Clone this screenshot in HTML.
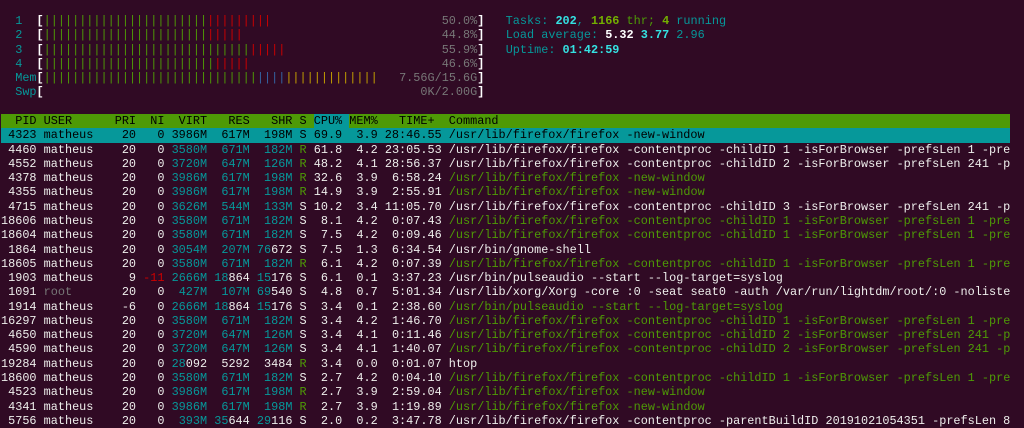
<!DOCTYPE html>
<html><head><meta charset="utf-8"><style>
html,body{margin:0;padding:0;background:#300a24;width:1024px;height:427px;overflow:hidden}
#t{position:absolute;left:1px;top:14px;width:1009px;font-family:"Liberation Mono",monospace;font-size:11.85px;color:#eeeeec}
.l{height:14.29px;line-height:14.29px;overflow:hidden;white-space:pre}
.c{color:#06989a}.C{color:#34e2e2;font-weight:bold}.g{color:#4e9a06}.G{color:#73b000;font-weight:bold}
.r{color:#cc0000}.b{color:#3465a4}.y{color:#c4a000}.k{color:#777777}.W{color:#fff;font-weight:bold}
.hd{background:#4e9a06;color:#000}.hc{background:#06989a}
.sel{background:#06989a;color:#000}
</style></head><body><div id="t"><div class="l">  <span class="c">1</span>  <span class="W">[</span><span class="g">|||||||||||||||||||||||</span><span class="r">|||||||||</span>                        <span class="k">50.0%</span><span class="W">]</span>   <span class="c">Tasks: </span><span class="C">202</span><span class="c">, </span><span class="G">1166</span><span class="g"> thr; </span><span class="G">4</span><span class="c"> running</span></div><div class="l">  <span class="c">2</span>  <span class="W">[</span><span class="g">|||||||||||||||||||||||</span><span class="r">|||||</span>                            <span class="k">44.8%</span><span class="W">]</span>   <span class="c">Load average: </span><span class="W">5.32 </span><span class="C">3.77 </span><span class="c">2.96</span></div><div class="l">  <span class="c">3</span>  <span class="W">[</span><span class="g">|||||||||||||||||||||||||||||</span><span class="r">|||||</span>                      <span class="k">55.9%</span><span class="W">]</span>   <span class="c">Uptime: </span><span class="C">01:42:59</span></div><div class="l">  <span class="c">4</span>  <span class="W">[</span><span class="g">||||||||||||||||||||||||</span><span class="r">|||||</span>                           <span class="k">46.6%</span><span class="W">]</span></div><div class="l">  <span class="c">Mem</span><span class="W">[</span><span class="g">||||||||||||||||||||||||||||||</span><span class="b">||||</span><span class="y">|||||||||||||</span>   <span class="k">7.56G/15.6G</span><span class="W">]</span></div><div class="l">  <span class="c">Swp</span><span class="W">[</span>                                                     <span class="k">0K/2.00G</span><span class="W">]</span></div><div class="l"> </div><div class="l hd">  PID USER      PRI  NI  VIRT   RES   SHR S <span class="hc">CPU% </span>MEM%   TIME+  Command</div><div class="l sel"> 4323 matheus    20   0 3986M  617M  198M S 69.9  3.9 28:46.55 /usr/lib/firefox/firefox -new-window</div><div class="l"> 4460 matheus    20   0 <span class="c">3580M</span>  <span class="c">671M</span>  <span class="c">182M</span> <span class="g">R</span> 61.8  4.2 23:05.53 /usr/lib/firefox/firefox -contentproc -childID 1 -isForBrowser -prefsLen 1 -pre</div><div class="l"> 4552 matheus    20   0 <span class="c">3720M</span>  <span class="c">647M</span>  <span class="c">126M</span> <span class="g">R</span> 48.2  4.1 28:56.37 /usr/lib/firefox/firefox -contentproc -childID 2 -isForBrowser -prefsLen 241 -p</div><div class="l"> 4378 matheus    20   0 <span class="c">3986M</span>  <span class="c">617M</span>  <span class="c">198M</span> <span class="g">R</span> 32.6  3.9  6:58.24 <span class="g">/usr/lib/firefox/firefox -new-window</span></div><div class="l"> 4355 matheus    20   0 <span class="c">3986M</span>  <span class="c">617M</span>  <span class="c">198M</span> <span class="g">R</span> 14.9  3.9  2:55.91 <span class="g">/usr/lib/firefox/firefox -new-window</span></div><div class="l"> 4715 matheus    20   0 <span class="c">3626M</span>  <span class="c">544M</span>  <span class="c">133M</span> S 10.2  3.4 11:05.70 /usr/lib/firefox/firefox -contentproc -childID 3 -isForBrowser -prefsLen 241 -p</div><div class="l">18606 matheus    20   0 <span class="c">3580M</span>  <span class="c">671M</span>  <span class="c">182M</span> S  8.1  4.2  0:07.43 <span class="g">/usr/lib/firefox/firefox -contentproc -childID 1 -isForBrowser -prefsLen 1 -pre</span></div><div class="l">18604 matheus    20   0 <span class="c">3580M</span>  <span class="c">671M</span>  <span class="c">182M</span> S  7.5  4.2  0:09.46 <span class="g">/usr/lib/firefox/firefox -contentproc -childID 1 -isForBrowser -prefsLen 1 -pre</span></div><div class="l"> 1864 matheus    20   0 <span class="c">3054M</span>  <span class="c">207M</span> <span class="c">76</span>672 S  7.5  1.3  6:34.54 /usr/bin/gnome-shell</div><div class="l">18605 matheus    20   0 <span class="c">3580M</span>  <span class="c">671M</span>  <span class="c">182M</span> <span class="g">R</span>  6.1  4.2  0:07.39 <span class="g">/usr/lib/firefox/firefox -contentproc -childID 1 -isForBrowser -prefsLen 1 -pre</span></div><div class="l"> 1903 matheus     9 <span class="r">-11</span> <span class="c">2666M</span> <span class="c">18</span>864 <span class="c">15</span>176 S  6.1  0.1  3:37.23 /usr/bin/pulseaudio --start --log-target=syslog</div><div class="l"> 1091 <span class="k">root     </span>  20   0  <span class="c">427M</span>  <span class="c">107M</span> <span class="c">69</span>540 S  4.8  0.7  5:01.34 /usr/lib/xorg/Xorg -core :0 -seat seat0 -auth /var/run/lightdm/root/:0 -noliste</div><div class="l"> 1914 matheus    -6   0 <span class="c">2666M</span> <span class="c">18</span>864 <span class="c">15</span>176 S  3.4  0.1  2:38.60 <span class="g">/usr/bin/pulseaudio --start --log-target=syslog</span></div><div class="l">16297 matheus    20   0 <span class="c">3580M</span>  <span class="c">671M</span>  <span class="c">182M</span> S  3.4  4.2  1:46.70 <span class="g">/usr/lib/firefox/firefox -contentproc -childID 1 -isForBrowser -prefsLen 1 -pre</span></div><div class="l"> 4650 matheus    20   0 <span class="c">3720M</span>  <span class="c">647M</span>  <span class="c">126M</span> S  3.4  4.1  0:11.46 <span class="g">/usr/lib/firefox/firefox -contentproc -childID 2 -isForBrowser -prefsLen 241 -p</span></div><div class="l"> 4590 matheus    20   0 <span class="c">3720M</span>  <span class="c">647M</span>  <span class="c">126M</span> S  3.4  4.1  1:40.07 <span class="g">/usr/lib/firefox/firefox -contentproc -childID 2 -isForBrowser -prefsLen 241 -p</span></div><div class="l">19284 matheus    20   0 <span class="c">28</span>092  5292  3484 <span class="g">R</span>  3.4  0.0  0:01.07 htop</div><div class="l">18600 matheus    20   0 <span class="c">3580M</span>  <span class="c">671M</span>  <span class="c">182M</span> S  2.7  4.2  0:04.10 <span class="g">/usr/lib/firefox/firefox -contentproc -childID 1 -isForBrowser -prefsLen 1 -pre</span></div><div class="l"> 4523 matheus    20   0 <span class="c">3986M</span>  <span class="c">617M</span>  <span class="c">198M</span> <span class="g">R</span>  2.7  3.9  2:59.04 <span class="g">/usr/lib/firefox/firefox -new-window</span></div><div class="l"> 4341 matheus    20   0 <span class="c">3986M</span>  <span class="c">617M</span>  <span class="c">198M</span> <span class="g">R</span>  2.7  3.9  1:19.89 <span class="g">/usr/lib/firefox/firefox -new-window</span></div><div class="l"> 5756 matheus    20   0  <span class="c">393M</span> <span class="c">35</span>644 <span class="c">29</span>116 S  2.0  0.2  3:47.78 /usr/lib/firefox/firefox -contentproc -parentBuildID 20191021054351 -prefsLen 8</div></div></body></html>
